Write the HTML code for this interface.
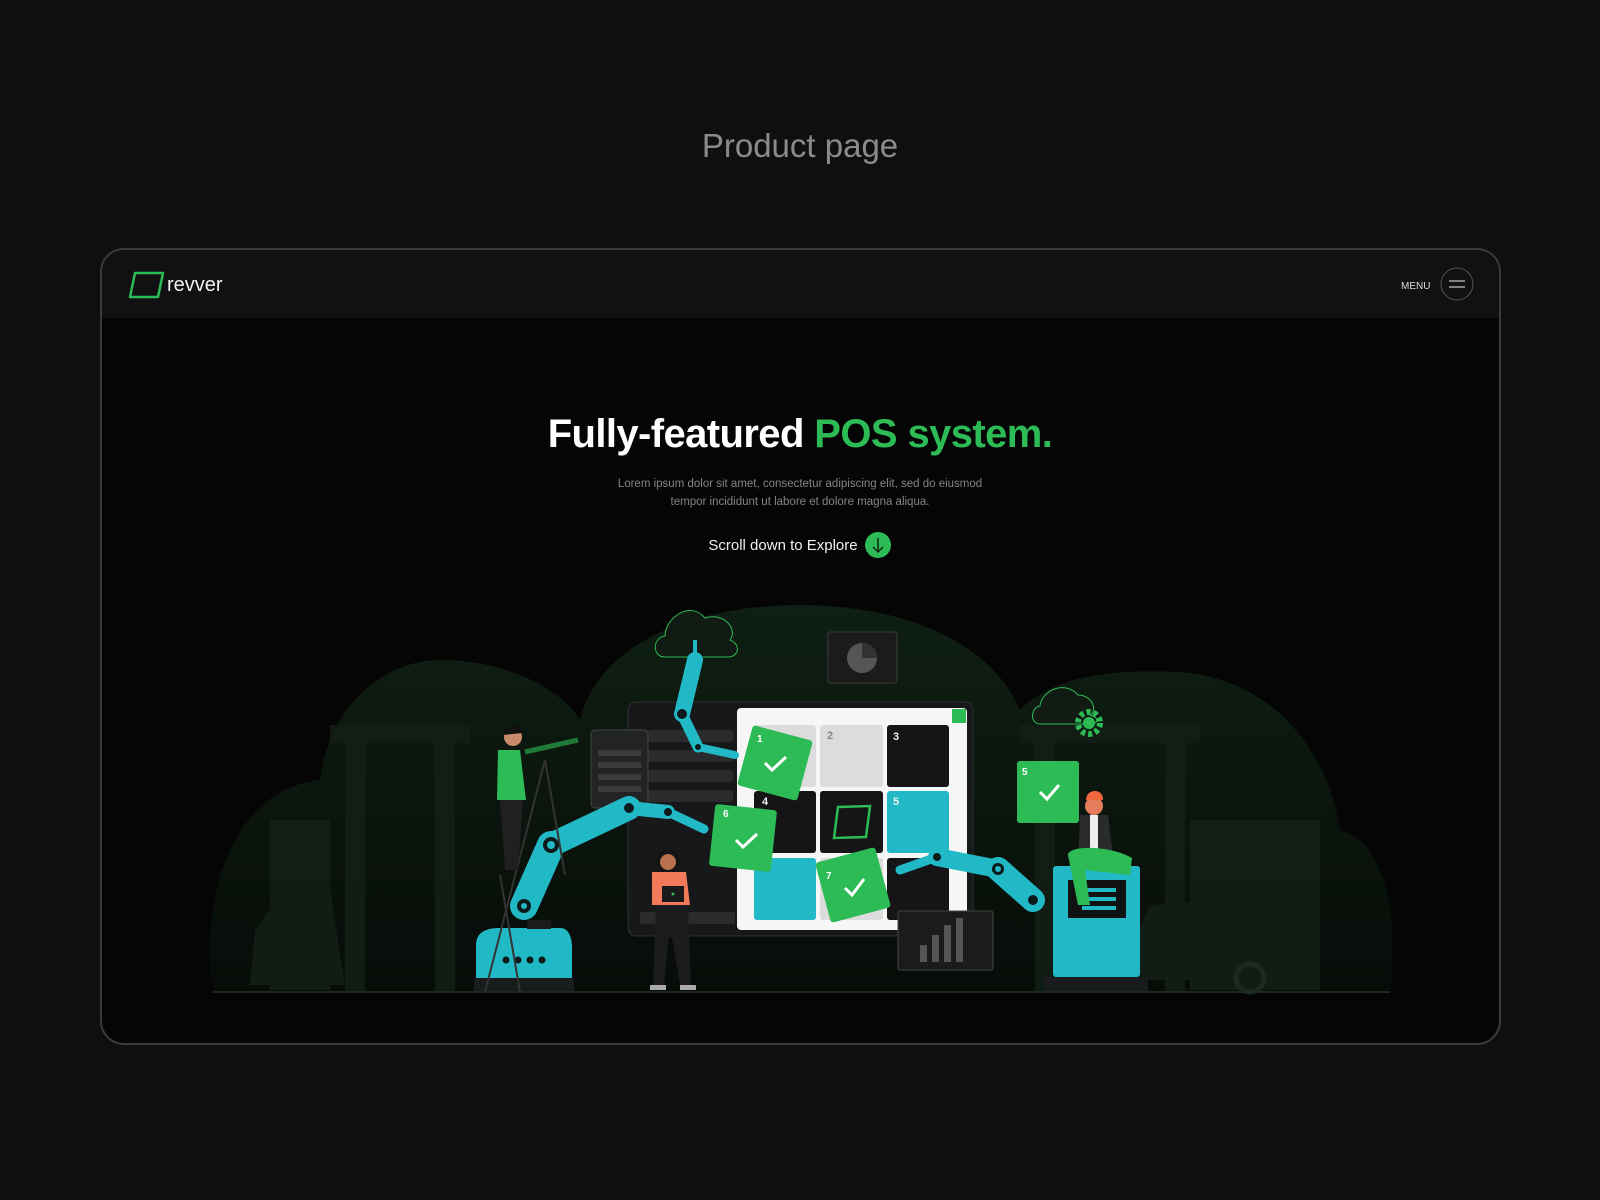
<!DOCTYPE html>
<html><head><meta charset="utf-8"><style>
html,body{margin:0;padding:0;width:1600px;height:1200px;background:#0f0f12;overflow:hidden;font-family:"Liberation Sans",sans-serif}
.t{position:absolute;left:0;width:1600px;text-align:center}
</style></head><body>
<div class="t" style="top:127px;font-size:33px;color:#8b8b8e">Product page</div>
<div style="position:absolute;left:100px;top:248px;width:1397px;height:793px;border:2px solid #3a3a3e;border-radius:24px;overflow:hidden;background:#050505">
  <div style="height:68px;background:#111114"></div>
</div>
<svg width="1600" height="1200" viewBox="0 0 1600 1200" style="position:absolute;left:0;top:0">
  <defs>
    <linearGradient id="bg" x1="0" y1="0" x2="0" y2="1">
      <stop offset="0" stop-color="#0f1f13"/><stop offset="1" stop-color="#070c08"/>
    </linearGradient>
  </defs>
  <path d="M135 273 L163 273 L158 297 L130 297 Z" fill="none" stroke="#2dbb55" stroke-width="2.5" stroke-linejoin="round"/>
  <text x="167" y="291" font-size="20" fill="#f0f0f0" font-family="Liberation Sans">revver</text>
  <text x="1401" y="289" font-size="10" fill="#ddd" font-family="Liberation Sans">MENU</text>
  <circle cx="1457" cy="284" r="16" fill="none" stroke="#555" stroke-width="1"/>
  <line x1="1449" y1="281" x2="1465" y2="281" stroke="#ccc" stroke-width="1.2"/>
  <line x1="1449" y1="287" x2="1465" y2="287" stroke="#ccc" stroke-width="1.2"/>
  <text x="800" y="447" text-anchor="middle" font-size="40" font-weight="bold" fill="#fff" font-family="Liberation Sans" letter-spacing="-0.6">Fully-featured <tspan fill="#2dbb55">POS system.</tspan></text>
  <text x="800" y="487" text-anchor="middle" font-size="11.5" fill="#858585">Lorem ipsum dolor sit amet, consectetur adipiscing elit, sed do eiusmod</text>
  <text x="800" y="505" text-anchor="middle" font-size="11.5" fill="#858585">tempor incididunt ut labore et dolore magna aliqua.</text>
  <text x="783" y="550" text-anchor="middle" font-size="15" fill="#f0f0f0">Scroll down to Explore</text>
  <circle cx="878" cy="545" r="13" fill="#2dbb55"/>
  <path d="M878 538 V552 M873 547 L878 552 L883 547" fill="none" stroke="#0a2a12" stroke-width="1.5"/>
  <g fill="url(#bg)">
    <path d="M213 991 C200 900 230 790 320 780 C330 700 390 660 440 660 C520 660 570 700 580 720 C600 640 700 605 800 605 C900 605 990 640 1020 710 C1060 670 1130 670 1180 672 C1280 680 1330 760 1340 830 C1380 840 1400 900 1390 991 Z"/>
  </g>
  <g fill="#142017" opacity="0.8">
    <rect x="330" y="725" width="140" height="18"/><rect x="345" y="743" width="20" height="248"/><rect x="435" y="743" width="20" height="248"/>
    <rect x="1020" y="725" width="180" height="18"/><rect x="1035" y="743" width="20" height="248"/><rect x="1165" y="743" width="20" height="248"/>
    <rect x="270" y="820" width="60" height="170"/><rect x="1190" y="820" width="130" height="170"/>
    <path d="M1130 950 L1150 905 L1240 900 L1285 940 L1290 980 L1140 980 Z"/>
    <path d="M255 930 L280 895 L330 890 L345 985 L250 985 Z"/>
  </g>
  <circle cx="1250" cy="978" r="14" fill="none" stroke="#1c2a1f" stroke-width="5"/>
  <line x1="213" y1="992" x2="1390" y2="992" stroke="#1a2a1d" stroke-width="2"/>
  <path d="M665 657 C652 657 652 638 665 636 C665 618 690 600 705 618 C725 612 738 630 730 640 C742 645 738 657 728 657 Z" fill="#121a14" stroke="#2dbb55" stroke-width="1"/>
  <path d="M1040 724 C1030 724 1030 708 1040 706 C1042 690 1065 680 1078 695 C1092 695 1098 710 1090 715 C1100 718 1098 724 1090 724 Z" fill="#121a14" stroke="#2dbb55" stroke-width="1"/>
  <circle cx="1089" cy="723" r="11" fill="none" stroke="#2dbb55" stroke-width="6" stroke-dasharray="4 3"/>
  <circle cx="1089" cy="723" r="6" fill="#2dbb55"/>
  <rect x="828" y="632" width="69" height="51" rx="2" fill="#1a1c1c" stroke="#3a3d3d"/>
  <circle cx="862" cy="658" r="15" fill="#555"/><path d="M862 658 V643 A15 15 0 0 1 877 658 Z" fill="#333"/>
  <rect x="628" y="702" width="345" height="234" rx="8" fill="#17181a" stroke="#2e3032"/>
  <g fill="#2a2b2d"><rect x="648" y="730" width="85" height="12" rx="2"/><rect x="648" y="750" width="85" height="12" rx="2"/><rect x="648" y="770" width="85" height="12" rx="2"/><rect x="648" y="790" width="85" height="12" rx="2"/><rect x="640" y="912" width="95" height="12" rx="2"/></g>
  <rect x="591" y="730" width="57" height="78" rx="4" fill="#222325" stroke="#444"/>
  <g fill="#3a3b3d"><rect x="598" y="750" width="43" height="6"/><rect x="598" y="762" width="43" height="6"/><rect x="598" y="774" width="43" height="6"/><rect x="598" y="786" width="43" height="6"/></g>
  <rect x="737" y="708" width="230" height="222" rx="4" fill="#f6f6f6"/>
  <rect x="952" y="709" width="14" height="14" fill="#2dbb55"/>
  <g font-size="11" font-weight="bold">
  <rect x="754" y="725" width="62" height="62" rx="3" fill="#dcdcdc"/>
  <rect x="820" y="725" width="63" height="62" rx="3" fill="#dcdcdc"/><text x="827" y="739" fill="#888">2</text>
  <rect x="887" y="725" width="62" height="62" rx="3" fill="#151517"/><text x="893" y="740" fill="#eee">3</text>
  <rect x="754" y="791" width="62" height="62" rx="3" fill="#151517"/><text x="762" y="805" fill="#eee">4</text>
  <rect x="820" y="791" width="63" height="62" rx="3" fill="#151517"/>
  <path d="M838 807 L870 806 L866 837 L834 838 Z" fill="none" stroke="#2dbb55" stroke-width="2.5"/>
  <rect x="887" y="791" width="62" height="62" rx="3" fill="#22b9c6"/><text x="893" y="805" fill="#eee">5</text>
  <rect x="754" y="858" width="62" height="62" rx="3" fill="#22b9c6"/>
  <rect x="820" y="858" width="63" height="62" rx="3" fill="#dcdcdc"/>
  <rect x="887" y="858" width="62" height="62" rx="3" fill="#151517"/>
  </g>
  <rect x="898" y="911" width="95" height="59" rx="2" fill="#1a1c1c" stroke="#444"/>
  <g fill="#555"><rect x="920" y="945" width="7" height="17"/><rect x="932" y="935" width="7" height="27"/><rect x="944" y="925" width="7" height="37"/><rect x="956" y="918" width="7" height="44"/></g>
  <g stroke="#22b9c6" stroke-linecap="round" fill="none">
    <line x1="524" y1="906" x2="551" y2="845" stroke-width="28"/>
    <line x1="551" y1="845" x2="629" y2="808" stroke-width="24"/>
    <line x1="629" y1="808" x2="668" y2="812" stroke-width="14"/>
    <line x1="668" y1="812" x2="704" y2="829" stroke-width="9"/>
    <line x1="695" y1="660" x2="682" y2="714" stroke-width="16"/>
    <line x1="682" y1="714" x2="698" y2="747" stroke-width="11"/>
    <line x1="698" y1="747" x2="735" y2="755" stroke-width="8"/>
    <line x1="1033" y1="900" x2="998" y2="869" stroke-width="24"/>
    <line x1="998" y1="869" x2="937" y2="857" stroke-width="18"/>
    <line x1="937" y1="857" x2="900" y2="870" stroke-width="9"/>
  </g>
  <g fill="#0c1a1c">
    <circle cx="551" cy="845" r="8"/><circle cx="524" cy="906" r="7"/><circle cx="629" cy="808" r="5"/><circle cx="668" cy="812" r="4"/>
    <circle cx="682" cy="714" r="5"/><circle cx="698" cy="747" r="3"/><circle cx="998" cy="869" r="6"/><circle cx="1033" cy="900" r="5"/><circle cx="937" cy="857" r="4"/>
  </g>
  <g fill="#22b9c6"><circle cx="551" cy="845" r="4"/><circle cx="524" cy="906" r="3"/><circle cx="998" cy="869" r="3"/></g>
  <line x1="695" y1="640" x2="695" y2="660" stroke="#22b9c6" stroke-width="4"/>
  <path d="M476 958 L476 945 C476 930 490 928 500 928 L560 928 C570 928 572 940 572 948 L572 978 L476 978 Z" fill="#22b9c6"/>
  <rect x="474" y="978" width="100" height="13" fill="#1a1b1d"/>
  <rect x="527" y="920" width="24" height="9" fill="#1a1b1d"/>
  <g fill="#0c1a1c"><circle cx="506" cy="960" r="3.5"/><circle cx="518" cy="960" r="3.5"/><circle cx="530" cy="960" r="3.5"/><circle cx="542" cy="960" r="3.5"/></g>
  <rect x="1053" y="866" width="87" height="111" rx="3" fill="#22b9c6"/>
  <rect x="1045" y="977" width="103" height="14" fill="#1a1b1d"/>
  <rect x="1068" y="880" width="58" height="38" fill="#101214"/>
  <g fill="#22b9c6"><rect x="1082" y="888" width="34" height="4"/><rect x="1082" y="897" width="34" height="4"/><rect x="1082" y="906" width="34" height="4"/></g>
  <g>
    <rect x="744" y="732" width="62" height="62" rx="3" fill="#2dbb55" transform="rotate(15 775 763)"/>
    <path d="M765 763 L772 770 L786 757" fill="none" stroke="#fff" stroke-width="3"/>
    <text x="757" y="742" font-size="10" font-weight="bold" fill="#fff">1</text>
    <rect x="712" y="807" width="62" height="62" rx="3" fill="#2dbb55" transform="rotate(6 743 838)"/>
    <path d="M736 840 L743 847 L757 834" fill="none" stroke="#fff" stroke-width="3"/>
    <text x="723" y="817" font-size="10" font-weight="bold" fill="#fff">6</text>
    <rect x="822" y="854" width="62" height="62" rx="3" fill="#2dbb55" transform="rotate(-15 853 885)"/>
    <path d="M845 888 L852 895 L864 879" fill="none" stroke="#fff" stroke-width="3"/>
    <text x="826" y="879" font-size="10" font-weight="bold" fill="#fff">7</text>
    <rect x="1017" y="761" width="62" height="62" rx="3" fill="#2dbb55"/>
    <path d="M1040 792 L1047 799 L1059 785" fill="none" stroke="#fff" stroke-width="3"/>
    <text x="1022" y="775" font-size="10" font-weight="bold" fill="#fff">5</text>
  </g>
  <g>
    <line x1="500" y1="875" x2="520" y2="992" stroke="#333" stroke-width="2"/><line x1="545" y1="760" x2="565" y2="875" stroke="#333" stroke-width="2"/>
    <line x1="485" y1="992" x2="545" y2="760" stroke="#333" stroke-width="2"/>
    <circle cx="513" cy="737" r="9" fill="#c98a6a"/><path d="M503 735 C503 722 524 722 522 733 Z" fill="#111"/>
    <path d="M498 750 L520 750 L526 800 L497 800 Z" fill="#2dbb55"/>
    <line x1="525" y1="752" x2="578" y2="740" stroke="#1f7a38" stroke-width="5"/>
    <path d="M500 800 L523 800 L518 870 L505 870 Z" fill="#202022"/>
  </g>
  <g>
    <path d="M657 862 C657 845 680 845 679 862 L679 880 L658 880 Z" fill="#151515"/>
    <circle cx="668" cy="862" r="8" fill="#b8704f"/>
    <path d="M652 872 L686 872 L690 905 L652 905 Z" fill="#f27a5a"/>
    <rect x="662" y="886" width="22" height="16" fill="#1a1a1a"/>
    <circle cx="673" cy="894" r="1.5" fill="#2dbb55"/>
    <path d="M656 905 L688 905 L691 985 L680 985 L670 925 L664 985 L653 985 Z" fill="#1c1c1e"/>
    <rect x="650" y="985" width="16" height="5" fill="#aaa"/><rect x="680" y="985" width="16" height="5" fill="#aaa"/>
  </g>
  <g>
    <circle cx="1094" cy="806" r="9" fill="#e57d5c"/><path d="M1086 800 C1086 788 1104 788 1103 800 Z" fill="#f0673e"/>
    <path d="M1080 815 L1108 815 L1114 865 L1078 865 Z" fill="#2a2b2d"/><rect x="1090" y="815" width="8" height="45" fill="#eee"/>
    <path d="M1068 855 C1068 845 1110 845 1132 858 L1130 875 L1085 870 L1090 905 L1078 905 Z" fill="#2dbb55"/>
  </g>
</svg>
</body></html>
